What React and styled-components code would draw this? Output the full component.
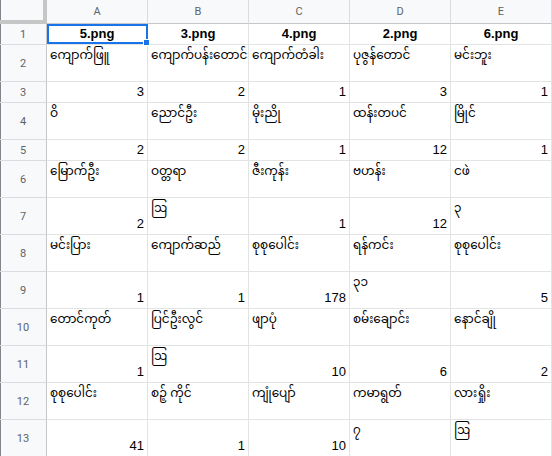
import React from 'react';
import styled, { createGlobalStyle } from 'styled-components';

const GlobalStyle = createGlobalStyle`
  body {
    margin: 0;
    background: #fff;
    font-family: "Liberation Sans", Arial, sans-serif;
  }
`;

const Sheet = styled.div`
  display: grid;
  grid-template-columns: 47px repeat(5, 101px);
  grid-auto-rows: 37px;
  width: 552px;
  height: 456px;
  overflow: hidden;
`;

const Corner = styled.div`
  box-sizing: border-box;
  background: #f8f9fa;
  border-right: 4px solid #c4c7c5;
  border-bottom: 4px solid #c4c7c5;
  box-shadow: inset 1px 0 #80868b;
`;

const ColHeader = styled.div`
  box-sizing: border-box;
  display: flex;
  align-items: center;
  justify-content: center;
  background: #f8f9fa;
  border-right: 1px solid #dadce0;
  border-bottom: 1px solid #c4c7c5;
  color: #5f6368;
  font-family: Roboto, "Liberation Sans", sans-serif;
  font-size: 11px;
`;

const RowHeader = styled.div`
  box-sizing: border-box;
  display: flex;
  align-items: center;
  justify-content: center;
  background: #f8f9fa;
  border-right: 1px solid #c4c7c5;
  border-bottom: 1px solid #dadce0;
  box-shadow: inset 1px 0 #80868b;
  color: #5f6368;
  font-family: Roboto, "Liberation Sans", sans-serif;
  font-size: 11px;
`;

const Cell = styled.div`
  position: relative;
  box-sizing: border-box;
  display: flex;
  align-items: ${props => (props.$kind === 'text' ? 'flex-start' : 'flex-end')};
  justify-content: ${props =>
    props.$kind === 'number' ? 'flex-end' : props.$kind === 'head' ? 'center' : 'flex-start'};
  padding: ${props => (props.$kind === 'text' ? '2px 3px 0' : '0 3px 2px')};
  border-right: 1px solid #e2e3e3;
  border-bottom: 1px solid #e2e3e3;
  background: #fff;
  color: #000;
  font-family: "Liberation Sans", "Noto Sans Myanmar", Padauk, "Myanmar Text", sans-serif;
  font-size: ${props => (props.$kind === 'text' ? 12 : 13)}px;
  font-weight: ${props => (props.$kind === 'head' ? 'bold' : 'normal')};
  line-height: 16px;
  white-space: nowrap;
  overflow: ${props => (props.$selected ? 'visible' : 'hidden')};
  z-index: ${props => (props.$selected ? 2 : 1)};
`;

const Selection = styled.div`
  position: absolute;
  top: 0;
  left: 0;
  right: -1px;
  bottom: 0;
  border: 2px solid #1a73e8;
  pointer-events: none;
`;

const FillHandle = styled.div`
  position: absolute;
  right: -4px;
  bottom: -4px;
  width: 5px;
  height: 5px;
  background: #1a73e8;
  border: 1px solid #fff;
`;

const columns = ['A', 'B', 'C', 'D', 'E'];

const rows = [
  { h: 21, cells: ['5.png', '3.png', '4.png', '2.png', '6.png'], head: true },
  { h: 37, cells: ['ကျောက်ဖြူ', 'ကျောက်ပန်းတောင်း', 'ကျောက်တံခါး', 'ပုဇွန်တောင်', 'မင်းဘူး'] },
  { h: 21, cells: [3, 2, 1, 3, 1] },
  { h: 37, cells: ['ဝိ', 'ညောင်ဦး', 'မိုးညို', 'ထန်းတပင်', 'မြိုင်'] },
  { h: 21, cells: [2, 2, 1, 12, 1] },
  { h: 37, cells: ['မြောက်ဦး', 'ဝတ္တရာ', 'ဇီးကုန်း', 'ဗဟန်း', 'ငဖဲ'] },
  { h: 37, cells: [2, 'ဩ', 1, 12, '၃'] },
  { h: 37, cells: ['မင်းပြား', 'ကျောက်ဆည်', 'စုစုပေါင်း', 'ရန်ကင်း', 'စုစုပေါင်း'] },
  { h: 37, cells: [1, 1, 178, '၃၁', 5] },
  { h: 37, cells: ['တောင်ကုတ်', 'ပြင်ဦးလွင်', 'ဖျာပုံ', 'စမ်းချောင်း', 'နောင်ချို'] },
  { h: 37, cells: [1, 'ဩ', 10, 6, 2] },
  { h: 37, cells: ['စုစုပေါင်း', 'စဉ့် ကိုင်', 'ကျုံပျော်', 'ကမာရွတ်', 'လားရှိုး'] },
  { h: 37, cells: [41, 1, 10, '၇', 'ဩ'] },
];

export default function App() {
  // row heights come from the data, so the template is built at run time
  const rowTemplate = ['24px', ...rows.map(r => r.h + 'px')].join(' ');

  return (
    <>
      <GlobalStyle />
      <Sheet style={{ gridTemplateRows: rowTemplate }}>
        <Corner />
        {columns.map(c => (
          <ColHeader key={c}>{c}</ColHeader>
        ))}
        {rows.map((row, i) => (
          <React.Fragment key={i}>
            <RowHeader>{i + 1}</RowHeader>
            {row.cells.map((value, j) => {
              const kind = row.head ? 'head' : typeof value === 'number' ? 'number' : 'text';
              const selected = i === 0 && j === 0;
              return (
                <Cell key={j} $kind={kind} $selected={selected}>
                  {value}
                  {selected && (
                    <Selection>
                      <FillHandle />
                    </Selection>
                  )}
                </Cell>
              );
            })}
          </React.Fragment>
        ))}
      </Sheet>
    </>
  );
}
